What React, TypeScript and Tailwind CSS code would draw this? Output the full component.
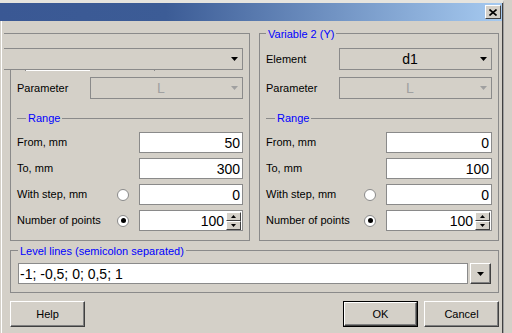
import React from 'react';

function Arrow({ gray }: { gray?: boolean }) {
  return (
    <svg width="7" height="4" viewBox="0 0 7 4" className="block flex-none">
      <polygon points="0,0 7,0 3.5,4" fill={gray ? '#a0a0a0' : '#000'} />
    </svg>
  );
}

function Combo({ value, disabled, className }: { value: string; disabled?: boolean; className?: string }) {
  return (
    <div className={`flex h-[22px] flex-none items-center border border-[#8a8a8a] bg-[#d4d0c8] pr-[4px] ${className ?? ''}`}>
      <span className={`flex-1 text-center text-[14px] leading-none ${disabled ? 'text-[#a0a0a0]' : 'text-black'}`}>{value}</span>
      <Arrow gray={disabled} />
    </div>
  );
}

function Radio({ checked }: { checked?: boolean }) {
  return (
    <div className="mr-[10px] flex h-[12px] w-[12px] flex-none items-center justify-center rounded-full border border-[#8a8a8a] bg-white">
      {checked && <div className="h-[5px] w-[5px] rounded-full bg-black" />}
    </div>
  );
}

function SpinBtn({ up }: { up?: boolean }) {
  return (
    <div className="flex h-[9px] w-[15px] items-center justify-center border border-t-white border-l-white border-r-[#404040] border-b-[#404040] bg-[#d4d0c8]">
      <svg width="5" height="3" viewBox="0 0 5 3" className="block">
        <polygon points={up ? '0,3 5,3 2.5,0' : '0,0 5,0 2.5,3'} fill="#000" />
      </svg>
    </div>
  );
}

function Field({ value, spin, w }: { value: string; spin?: boolean; w: string }) {
  return (
    <div className={`flex h-[21px] flex-none items-center justify-end border border-[#8a8a8a] bg-white pr-[1px] text-[14px] leading-none text-black ${w}`}>
      <span className={spin ? 'mr-[2px]' : 'mr-[1px]'}>{value}</span>
      {spin && (
        <div className="flex flex-col">
          <SpinBtn up />
          <SpinBtn />
        </div>
      )}
    </div>
  );
}

function Range({ vals, w }: { vals: string[]; w: string }) {
  const labels = ['From, mm', 'To, mm', 'With step, mm', 'Number of points'];
  return (
    <div className="flex flex-col">
      <div className="mt-[12px] flex h-[14px] items-center">
        <div className="h-px w-[9px] bg-[#8a8a8a]" />
        <span className="px-[2px] text-[11px] text-[#0000ff]">Range</span>
        <div className="h-px flex-1 bg-[#8a8a8a]" />
      </div>
      <div className="mt-[7px] flex flex-col gap-[5px]">
        {labels.map((l, i) => (
          <div key={l} className="flex items-center">
            <span className="flex-1 text-[11px] text-black">{l}</span>
            {i >= 2 && <Radio checked={i === 3} />}
            <Field value={vals[i]} spin={i === 3} w={w} />
          </div>
        ))}
      </div>
    </div>
  );
}

function Button({ label, isDefault }: { label: string; isDefault?: boolean }) {
  const face = (
    <div className="flex h-full w-full items-center justify-center border border-t-white border-l-white border-r-[#404040] border-b-[#404040] bg-[#d4d0c8] text-[11px] text-black shadow-[inset_-1px_-1px_0_#808080]">
      {label}
    </div>
  );
  return isDefault ? <div className="h-[26px] w-[75px] border border-black">{face}</div> : <div className="h-[26px] w-[75px]">{face}</div>;
}

export default function App() {
  return (
    <div className="h-[333px] w-[512px] overflow-hidden bg-[#d4d0c8] font-['Liberation_Sans',Arial,sans-serif]">
      <div className="h-full w-[504px] border-r border-[#a0a0a0] border-t-[3px] border-t-[#e6e4de]">
        <div className="h-full border-r border-[#404040]">
          <div className="flex h-[18px] items-center justify-end bg-[linear-gradient(to_right,#3a5894_0%,#3c5c96_33%,#a6caf0_100%)] pr-[1px]">
            <div className="flex h-[14px] w-[16px] items-center justify-center border border-t-white border-l-white border-r-[#404040] border-b-[#404040] bg-[#d4d0c8]">
              <svg width="8" height="7" viewBox="0 0 8 7" className="block">
                <path d="M0.5 0.5 L7.5 6.5 M7.5 0.5 L0.5 6.5" stroke="#000" strokeWidth="1.6" />
              </svg>
            </div>
          </div>
          <div className="ml-[1px] h-full overflow-hidden border-l border-white">
            <div className="mt-[12px] flex gap-[9px]">
              <div className="ml-[2px] flex h-[208px] w-[246px] flex-col border-t border-r border-[#8a8a8a]">
                <div className="mt-[14px] flex h-[22px] w-[239px] items-center justify-end border border-l-0 border-[#8a8a8a] pr-[4px]">
                  <Arrow />
                </div>
                <div className="ml-[6px] flex flex-1 flex-col border-l border-b border-[#8a8a8a]">
                  <div className="ml-[14px] flex h-px w-[130px] border-l border-r border-[#8a8a8a]">
                    <div className="w-[64px] bg-white" />
                  </div>
                  <div className="flex flex-col pl-[6px] pr-[6px]">
                    <div className="mt-[6px] flex items-center">
                      <span className="flex-1 text-[11px] text-black">Parameter</span>
                      <Combo value="L" disabled className="w-[153px]" />
                    </div>
                    <Range vals={['50', '300', '0', '100']} w="w-[104px]" />
                  </div>
                </div>
              </div>
              <div className="relative flex h-[208px] w-[240px] flex-col border border-[#8a8a8a] pl-[6px] pr-[6px]">
                <span className="absolute -top-[6px] left-[6px] bg-[#d4d0c8] px-[2px] text-[11px] leading-[13px] text-[#0000ff]">Variable 2 (Y)</span>
                <div className="mt-[14px] flex items-center">
                  <span className="flex-1 text-[11px] text-black">Element</span>
                  <Combo value="d1" className="w-[153px]" />
                </div>
                <div className="mt-[7px] flex items-center">
                  <span className="flex-1 text-[11px] text-black">Parameter</span>
                  <Combo value="L" disabled className="w-[153px]" />
                </div>
                <Range vals={['0', '100', '0', '100']} w="w-[106px]" />
              </div>
            </div>
            <div className="relative ml-[8px] mt-[9px] flex h-[43px] w-[489px] items-start gap-[2px] border border-[#8a8a8a] pl-[7px] pr-[7px] pt-[12px]">
              <span className="absolute -top-[6px] left-[7px] bg-[#d4d0c8] px-[2px] text-[11px] leading-[13px] text-[#0000ff]">Level lines (semicolon separated)</span>
              <div className="flex h-[21px] flex-1 items-center border border-[#8a8a8a] bg-white pl-[1px] text-[14px] leading-none text-black">-1; -0,5; 0; 0,5; 1</div>
              <div className="flex h-[21px] w-[21px] items-center justify-center border border-t-white border-l-white border-r-[#404040] border-b-[#404040] bg-[#d4d0c8] shadow-[inset_-1px_-1px_0_#808080]">
                <Arrow />
              </div>
            </div>
            <div className="mt-[8px] flex w-[497px] items-start justify-between">
              <div className="ml-[8px]">
                <Button label="Help" />
              </div>
              <div className="flex gap-[6px]">
                <Button label="OK" isDefault />
                <Button label="Cancel" />
              </div>
            </div>
          </div>
        </div>
      </div>
    </div>
  );
}
